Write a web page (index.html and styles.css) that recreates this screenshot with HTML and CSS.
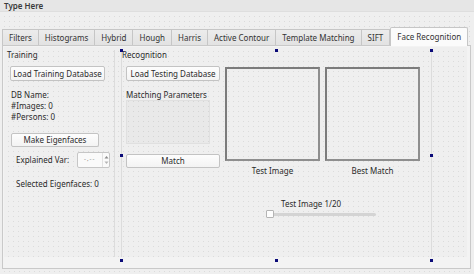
FILE: index.html
```html
<!DOCTYPE html>
<html lang="en">

<head>
    <meta charset="UTF-8">
    <title>Face Recognition - Designer</title>
    <link rel="stylesheet" href="styles.css">
</head>

<body>
    <div class="menubar"><span class="menu-item">Type Here</span></div>

    <div class="canvas dots">
        <div class="tabbar">
            <div class="tab">Filters</div>
            <div class="tab">Histograms</div>
            <div class="tab">Hybrid</div>
            <div class="tab">Hough</div>
            <div class="tab">Harris</div>
            <div class="tab">Active Contour</div>
            <div class="tab">Template Matching</div>
            <div class="tab">SIFT</div>
            <div class="tab active">Face Recognition</div>
        </div>

        <div class="pane">
            <div class="form dots">
                <div class="group training">
                    <div class="group-title">Training</div>
                    <button class="btn btn-load">Load Training Database</button>
                    <div class="info">
                        <div>DB Name:</div>
                        <div>#Images: 0</div>
                        <div>#Persons: 0</div>
                    </div>
                    <button class="btn btn-eigen">Make Eigenfaces</button>
                    <div class="var-row">
                        <span class="var-label">Explained Var:</span>
                        <div class="spinbox">
                            <span class="spin-text">-,--</span>
                            <span class="spin-arrows">
                                <svg width="5" height="12" viewBox="0 0 5 12">
                                    <path d="M0.5 4.5 L2.5 2 L4.5 4.5 Z" fill="#8a8a8a" />
                                    <path d="M0.5 7.5 L2.5 10 L4.5 7.5 Z" fill="#b5b5b5" />
                                </svg>
                            </span>
                        </div>
                    </div>
                    <div class="selected">Selected Eigenfaces: 0</div>
                </div>

                <div class="group recognition">
                    <div class="group-title">Recognition</div>
                    <div class="rec-grid">
                        <div class="rec-left">
                            <button class="btn btn-load">Load Testing Database</button>
                            <div class="params-label">Matching Parameters</div>
                            <div class="params-box"></div>
                            <button class="btn btn-match">Match</button>
                        </div>
                        <div class="image-col">
                            <div class="image-frame"></div>
                            <div class="image-label">Test Image</div>
                        </div>
                        <div class="image-col">
                            <div class="image-frame"></div>
                            <div class="image-label">Best Match</div>
                        </div>
                    </div>
                    <div class="slider-block">
                        <div class="slider-label">Test Image 1/20</div>
                        <div class="slider">
                            <div class="groove"></div>
                            <div class="knob"></div>
                        </div>
                    </div>
                </div>

                <!-- designer selection handles -->
                <span class="handle h-tl"></span>
                <span class="handle h-tm"></span>
                <span class="handle h-tr"></span>
                <span class="handle h-ml"></span>
                <span class="handle h-mr"></span>
                <span class="handle h-bl"></span>
                <span class="handle h-bm"></span>
                <span class="handle h-br"></span>
            </div>
        </div>
    </div>
</body>

</html>
```

FILE: styles.css
```css
* {
    box-sizing: border-box;
}

body {
    margin: 0;
    width: 474px;
    height: 274px;
    overflow: hidden;
    background-color: #f4f4f4;
    color: #2a2a2a;
    font-family: "Noto Sans", "Open Sans", sans-serif;
    font-size: 8px;
    line-height: 11px;
}

/* dotted designer grid */
.dots {
    background-color: #efefef;
    background-image:
        linear-gradient(to right, #efefef 4px, transparent 4px),
        linear-gradient(#efefef 4px, #dbdbdb 4px);
    background-size: 5px 5px;
}

.menubar {
    height: 12px;
    background-color: #e6e6e6;
    border-bottom: 1px solid #dedede;
    padding-left: 4px;
    line-height: 11px;
}

.menu-item {
    font-weight: 600;
    color: #3a3a3a;
}

.canvas {
    height: 262px;
    padding: 15px 3px 5px 2px;
}

.tabbar {
    display: flex;
    height: 19px;
    align-items: flex-end;
    position: relative;
    z-index: 1;
}

.tab {
    height: 16px;
    margin-bottom: 1px;
    padding: 0 6px;
    line-height: 15px;
    background: linear-gradient(#ececec, #e2e2e2);
    border: 1px solid #c6c6c6;
    border-left: none;
    border-bottom: none;
    color: #333;
    white-space: nowrap;
}

.tab:first-child {
    border-left: 1px solid #c6c6c6;
}

.tab.active {
    height: 19px;
    margin-bottom: 0;
    background: #fbfbfb;
    border-left: 1px solid #c6c6c6;
    border-radius: 2px 2px 0 0;
    line-height: 17px;
}

.pane {
    height: 224px;
    margin-top: -1px;
    background-color: #f3f3f3;
    border: 1px solid #c9c9c9;
    padding: 1px 3px 11px 1px;
}

.form {
    position: relative;
    height: 210px;
    display: flex;
    padding-top: 3px;
    gap: 6px;
}

.group {
    display: flex;
    flex-direction: column;
    align-items: flex-start;
}

.group-title {
    height: 10px;
    line-height: 10px;
}

.training {
    width: 111px;
    border-right: 1px solid #dcdcdc;
}

.training .group-title {
    padding-left: 3px;
}

.recognition {
    width: 311px;
    border-left: 1px solid #dcdcdc;
    border-right: 1px solid #dcdcdc;
}

.btn {
    font: inherit;
    color: #2c2c2c;
    background: linear-gradient(#fdfdfd, #f3f3f3);
    border: 1px solid #c3c3c3;
    border-radius: 2px;
    padding: 0;
    height: 15px;
    line-height: 13px;
    white-space: nowrap;
}

.training .btn-load {
    margin: 6px 0 0 6px;
    width: 95px;
}

.info {
    margin-top: 8px;
    padding-left: 7px;
}

.btn-eigen {
    margin: 11px 0 0 7px;
    width: 88px;
    height: 14px;
    line-height: 12px;
}

.var-row {
    display: flex;
    align-items: center;
    margin-top: 4px;
    height: 17px;
    padding-left: 12px;
}

.var-label {
    width: 61px;
}

.spinbox {
    width: 33px;
    height: 16px;
    display: flex;
    align-items: center;
    background: #fafafa;
    border: 1px solid #c6c6c6;
    border-radius: 2px;
}

.spin-text {
    flex: 1;
    padding-left: 6px;
    font-size: 6px;
    color: #777;
    letter-spacing: 1px;
}

.spin-arrows {
    display: flex;
    width: 7px;
    height: 14px;
    align-items: center;
    justify-content: center;
    border-left: 1px solid #e2e2e2;
}

.selected {
    margin-top: 10px;
    padding-left: 12px;
}

.rec-grid {
    display: flex;
    gap: 5px;
    margin: 6px 0 0 4px;
}

.rec-left {
    width: 94px;
    display: flex;
    flex-direction: column;
    align-items: flex-start;
}

.rec-left .btn {
    width: 94px;
}

.params-label {
    margin-top: 8px;
}

.params-box {
    width: 84px;
    height: 44px;
    background-color: rgba(0, 0, 0, 0.025);
    border: 1px solid #e0e0e0;
}

.btn-match {
    margin-top: 10px;
    height: 14px;
    line-height: 12px;
}

.image-col {
    width: 95px;
}

.image-frame {
    margin-top: 1px;
    height: 94px;
    border: 2px solid #7c7c7c;
    border-right-color: #8e8e8e;
    border-bottom-color: #8e8e8e;
}

.image-label {
    margin-top: 4px;
    text-align: center;
}

.slider-block {
    margin: 22px 0 0 144px;
    width: 110px;
}

.slider-label {
    padding-left: 15px;
}

.slider {
    position: relative;
    height: 8px;
    margin-top: 1px;
}

.groove {
    position: absolute;
    left: 2px;
    right: 0;
    top: 3px;
    height: 3px;
    background-color: #d4d4d4;
    border-radius: 2px;
}

.knob {
    position: absolute;
    left: 0;
    top: 0;
    width: 8px;
    height: 8px;
    background: #fdfdfd;
    border: 1px solid #b4b4b4;
    border-radius: 1px;
}

.handle {
    position: absolute;
    width: 3px;
    height: 3px;
    background-color: #0a0a78;
}

.h-tl { left: 116px; top: 2px; }
.h-tm { left: 271px; top: 2px; }
.h-tr { left: 426px; top: 2px; }
.h-ml { left: 116px; top: 107px; }
.h-mr { left: 426px; top: 107px; }
.h-bl { left: 116px; top: 212px; }
.h-bm { left: 271px; top: 212px; }
.h-br { left: 426px; top: 212px; }
```
